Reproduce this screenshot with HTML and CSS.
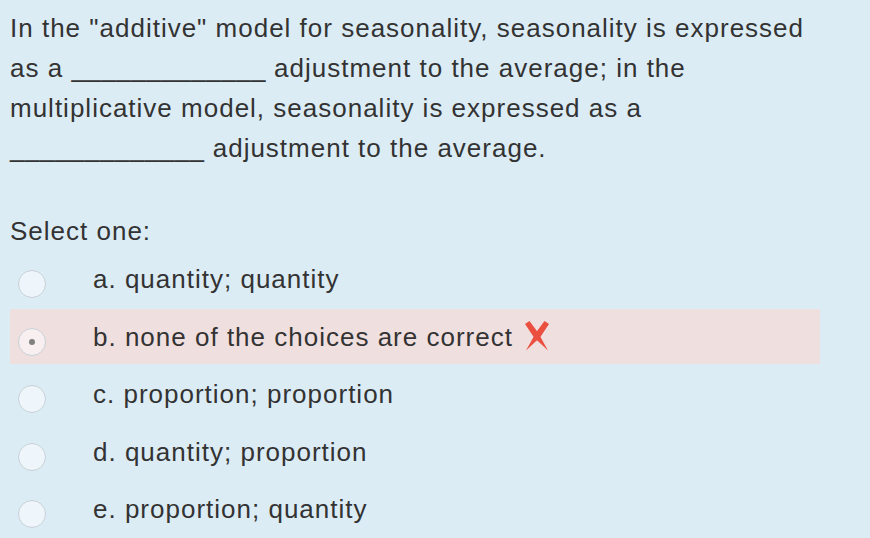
FILE: index.html
```html
<!DOCTYPE html>
<html>
<head>
<meta charset="utf-8">
<link rel="stylesheet" href="styles.css">
</head>
<body>
<div class="question">
  <p class="qtext">In the "additive" model for seasonality, seasonality is expressed as a <span class="blank">_____________</span> adjustment to the average; in the multiplicative model, seasonality is expressed as a <span class="blank">_____________</span> adjustment to the average.</p>
  <div class="prompt">Select one:</div>
  <div class="answers">
    <div class="row"><span class="radio"></span><span class="label">a. quantity; quantity</span></div>
    <div class="row incorrect"><span class="radio checked"></span><span class="label">b. none of the choices are correct</span><svg class="xicon" viewBox="0 0 24 30" width="24" height="30"><polygon points="0,3 4.5,0 13,11.5 23,29.5 9,16.5" fill="#ea4f3f"/><polygon points="19.5,0 24,3 15,16.5 1,29.5 11,11.5" fill="#ea4f3f"/></svg></div>
    <div class="row"><span class="radio"></span><span class="label">c. proportion; proportion</span></div>
    <div class="row"><span class="radio"></span><span class="label">d. quantity; proportion</span></div>
    <div class="row"><span class="radio"></span><span class="label">e. proportion; quantity</span></div>
  </div>
</div>
</body>
</html>
```

FILE: styles.css
```css
html, body {
  margin: 0;
  padding: 0;
  background: #dcecf5;
}
body {
  font-family: "Liberation Sans", Arial, sans-serif;
  font-size: 26px;
  line-height: 40px;
  letter-spacing: 1px;
  color: #333333;
}
.question {
  width: 810px;
  padding: 8px 0 0 10px;
}
.qtext {
  margin: 0;
}
.blank {
  letter-spacing: 0.5px;
}
.prompt {
  margin-top: 43px;
}
.answers {
  display: flex;
  flex-direction: column;
  gap: 2.5px;
}
.row {
  display: flex;
  align-items: flex-start;
  height: 55px;
  box-sizing: border-box;
  padding: 8px 0 0 8px;
}
.row.incorrect {
  background: #f0dfdf;
}
.radio {
  width: 26px;
  height: 26px;
  border: 1px solid #c9d1d7;
  border-radius: 50%;
  background: #eef5fb;
  margin-top: 11px;
  margin-right: 47px;
  flex: none;
  position: relative;
}
.incorrect .radio {
  background: #f7eff0;
}
.radio.checked::after {
  content: "";
  position: absolute;
  left: 10px;
  top: 10px;
  width: 6px;
  height: 6px;
  border-radius: 50%;
  background: #808080;
}
.label {
  white-space: nowrap;
}
.xicon {
  margin-left: 12px;
  margin-top: 4px;
  flex: none;
}
```
